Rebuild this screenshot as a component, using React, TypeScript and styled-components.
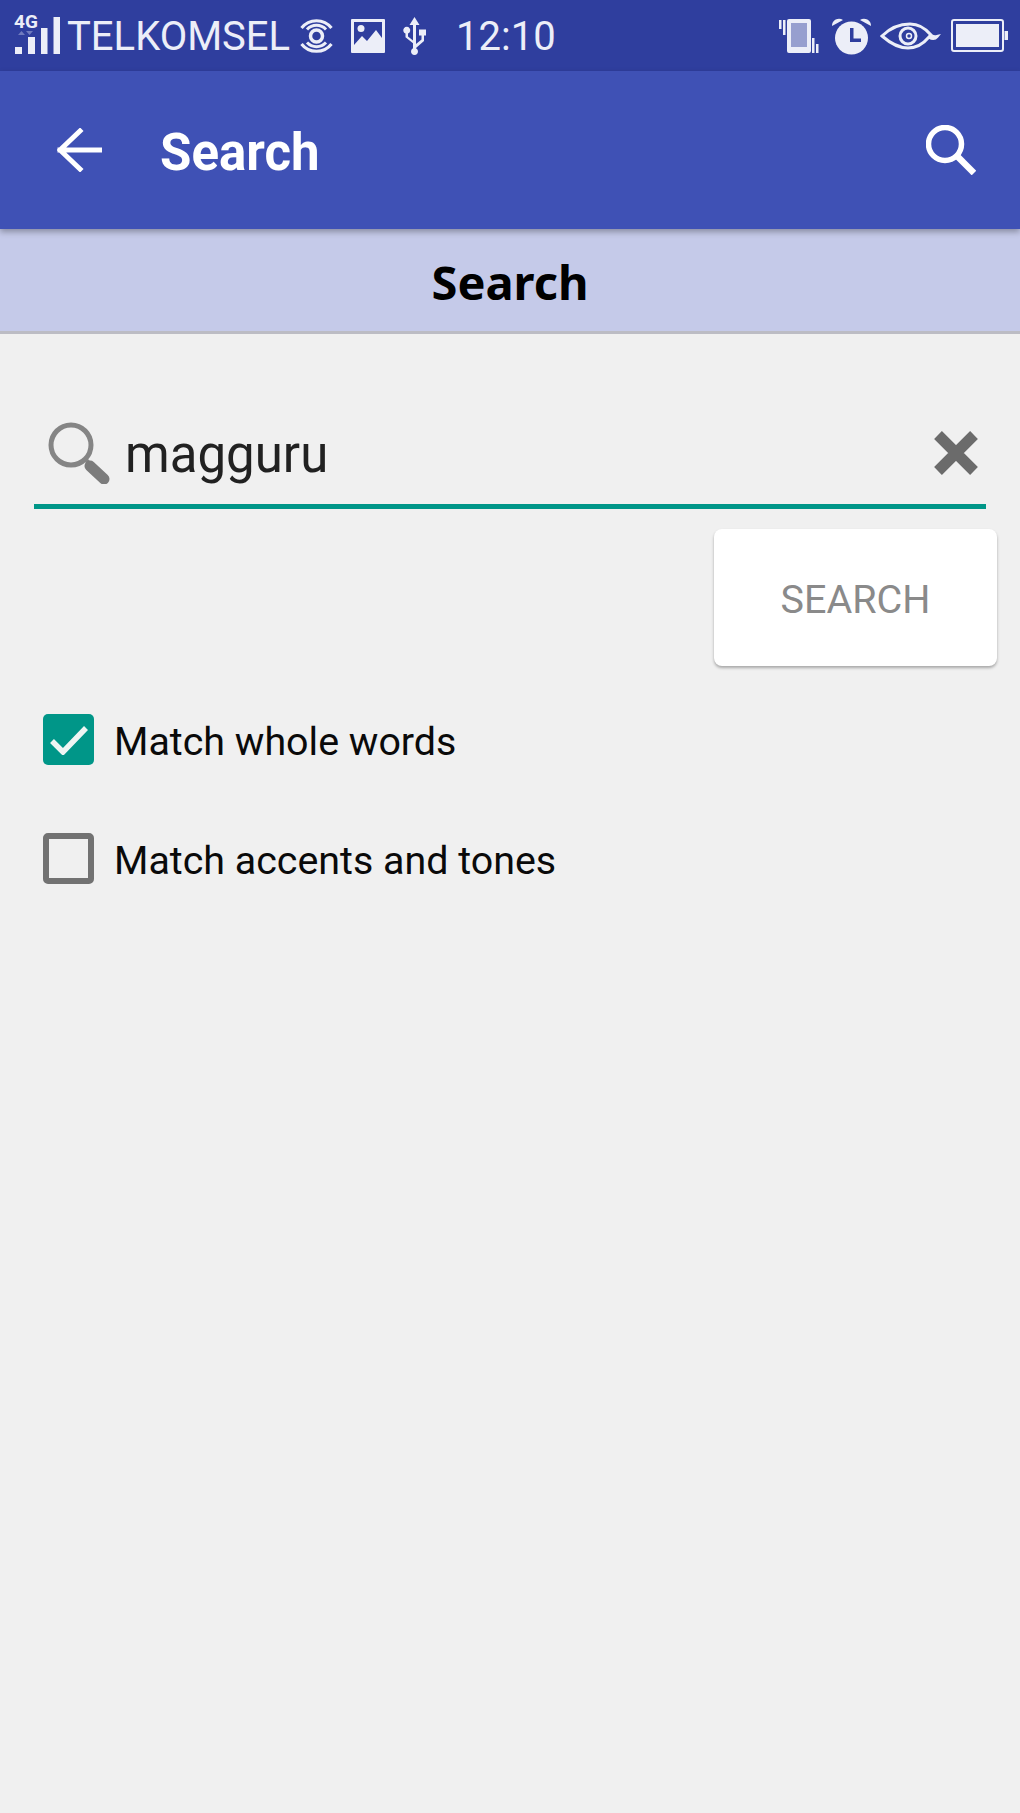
import React from "react";
import styled, { createGlobalStyle } from "styled-components";

const Global = createGlobalStyle`
  html, body { margin: 0; padding: 0; background: #f0f0f0; }
  * { box-sizing: border-box; }
`;

const Page = styled.div`
  width: 1020px;
  height: 1813px;
  background: #f0f0f0;
  font-family: Roboto, "Liberation Sans", sans-serif;
  overflow: hidden;
`;

const StatusBar = styled.div`
  height: 71px;
  background: #2f3e9e;
  display: flex;
  align-items: center;
  color: #eceef8;
  padding: 0 12px 0 15px;
`;

const StatusGroup = styled.div`
  display: flex;
  align-items: center;
`;

const Spacer = styled.div`
  flex: 1;
`;

const Carrier = styled.span<{ $left: number }>`
  font-size: 40px;
  line-height: 44px;
  padding-top: 3px;
  margin-left: ${(p) => p.$left}px;
  white-space: nowrap;
`;

const StatusIcon = styled.svg<{ $left?: number }>`
  display: block;
  flex: none;
  margin-left: ${(p) => p.$left ?? 0}px;
  fill: #eceef8;
  overflow: visible;
`;

const Toolbar = styled.header`
  height: 158px;
  background: #3f51b5;
  display: flex;
  align-items: center;
  padding: 0 44px 0 57px;
  position: relative;
  z-index: 1;
  box-shadow: 0 3px 6px rgba(0, 0, 0, 0.3);
`;

const ToolbarTitle = styled.h1`
  margin: 5px 0 0 58px;
  font-size: 51px;
  line-height: 60px;
  font-weight: 700;
  color: #fff;
  flex: 1;
`;

const SubHeader = styled.div`
  height: 105px;
  background: #c5cae9;
  border-bottom: 3px solid #bcbcc4;
  display: flex;
  align-items: center;
  justify-content: center;
`;

const SubTitle = styled.h2`
  margin: 3px 0 0;
  font-family: "Noto Sans", "DejaVu Sans", sans-serif;
  font-weight: 700;
  font-size: 47px;
  line-height: 50px;
  color: #000;
`;

const Content = styled.main`
  display: flex;
  flex-direction: column;
  padding: 84px 23px 0 34px;
`;

const SearchField = styled.div`
  display: flex;
  align-items: center;
  height: 91px;
  width: 952px;
  padding: 0 8px 16px 14px;
  border-bottom: 5px solid #009688;
`;

const SearchText = styled.span`
  flex: 1;
  margin-left: 15px;
  font-size: 51px;
  line-height: 56px;
  padding-top: 4px;
  color: #212121;
`;

const SearchButton = styled.button`
  align-self: flex-end;
  width: 283px;
  height: 137px;
  margin-top: 20px;
  padding: 3px 0 0;
  border: 0;
  border-radius: 8px;
  background: #fff;
  box-shadow: 0 2px 3px rgba(0, 0, 0, 0.3);
  font-family: inherit;
  font-size: 39.500px;
  color: #8a8a8a;
`;

const OptionList = styled.div`
  display: flex;
  flex-direction: column;
  gap: 68px;
  margin: 48px 0 0 9px;
`;

const Option = styled.label`
  display: flex;
  align-items: center;
  gap: 20px;
  height: 51px;
  font-size: 39.400px;
  color: #0a0a0a;
`;

const OptionLabel = styled.span`
  padding-top: 4px;
`;

const Box = styled.span<{ $checked?: boolean }>`
  width: 51px;
  height: 51px;
  flex: none;
  display: flex;
  align-items: center;
  justify-content: center;
  border-radius: 5px;
  background: ${(p) => (p.$checked ? "#009688" : "transparent")};
  border: ${(p) => (p.$checked ? "0" : "6px solid #727272")};
`;

export default function App() {
  return (
    <Page>
      <Global />
      <StatusBar>
        <StatusGroup>
          <StatusIcon width={45} height={71} viewBox="0 0 45 71">
            <text x="-1" y="28" fontFamily="Roboto, sans-serif" fontWeight="700" fontSize="19" fill="#eceef8">4G</text>
            <path d="M3 35h7l-3.500-4zM11 31h7l-3.500 4z" opacity=".35" />
            <rect x="0" y="47" width="7" height="7" />
            <rect x="13" y="37" width="7" height="17" />
            <rect x="26" y="28" width="6.500" height="26" />
            <rect x="38.500" y="17" width="6.500" height="37" />
          </StatusIcon>
          <Carrier $left={7}>TELKOMSEL</Carrier>
          <StatusIcon $left={9} width={35} height={34} viewBox="0 0 35 34">
            <circle cx="17.500" cy="17" r="6" fill="none" stroke="#eceef8" strokeWidth="3.500" />
            <path d="M8 10.500a13 13 0 0 1 19 0M2.500 9a19 19 0 0 1 30 0M8 23.500a13 13 0 0 0 19 0M2.500 25a19 19 0 0 0 30 0" fill="none" stroke="#eceef8" strokeWidth="3" />
          </StatusIcon>
          <StatusIcon $left={17} width={34} height={34} viewBox="0 0 34 34">
            <path fillRule="evenodd" d="M1 0h32a1 1 0 0 1 1 1v32a1 1 0 0 1-1 1H1a1 1 0 0 1-1-1V1a1 1 0 0 1 1-1zM3 3v23l8-9 5 5 9-11 6 8V3z" />
            <circle cx="10" cy="9.500" r="3.500" />
          </StatusIcon>
          <StatusIcon $left={16} width={27} height={37} viewBox="0 0 27 37">
            <path d="M13.500 0l5 8H15v19l5.500-4.500v-4H18v-6h7v6h-2v5.500L15 31v.3a3.500 3.500 0 1 1-3 0v-5l-7.500-6V16.500a3.500 3.500 0 1 1 2.500 0v3l5 4V8H8.500z" />
          </StatusIcon>
          <Carrier $left={28}>12:10</Carrier>
        </StatusGroup>
        <Spacer />
        <StatusGroup>
          <StatusIcon width={39} height={36} viewBox="0 0 39 36">
            <path fillRule="evenodd" d="M10 1h20a2 2 0 0 1 2 2v30a2 2 0 0 1-2 2H10a2 2 0 0 1-2-2V3a2 2 0 0 1 2-2zm2 4v24h16V5z" />
            <rect x="12" y="5" width="16" height="24" opacity=".55" />
            <rect x="0" y="2" width="2.500" height="9" />
            <rect x="4" y="2" width="2.500" height="15" />
            <rect x="33" y="20" width="2.500" height="15" />
            <rect x="37" y="26" width="2.500" height="9" />
          </StatusIcon>
          <StatusIcon $left={14} width={39} height={38} viewBox="0 0 39 38">
            <path d="M0 9a7 7 0 0 1 11-6zM39 9a7 7 0 0 0-11-6z" />
            <circle cx="19.500" cy="21" r="16.500" />
            <path d="M18 11h3.500v10.500H29V25H18z" fill="#2f3e9e" />
          </StatusIcon>
          <StatusIcon $left={10} width={57} height={26} viewBox="0 0 57 26">
            <path d="M1 13C10 4 20 1 29 1c9 0 16 5 21 11 2 2 4 2 6 1.500-2 2.500-5 2.500-8 .5C43 20 36 25 27 25 17 25 9 20 1 13z" fill="none" stroke="#eceef8" strokeWidth="3" />
            <circle cx="27" cy="13" r="8" fill="none" stroke="#eceef8" strokeWidth="3" />
            <circle cx="28" cy="13" r="2.500" fill="none" stroke="#eceef8" strokeWidth="1.500" />
          </StatusIcon>
          <StatusIcon $left={13} width={57} height={33} viewBox="0 0 57 33">
            <rect x="1" y="1" width="51" height="31" rx="2" fill="none" stroke="#eceef8" strokeWidth="2" />
            <rect x="5" y="5" width="43" height="23" />
            <rect x="53.500" y="12" width="3.500" height="9" />
          </StatusIcon>
        </StatusGroup>
      </StatusBar>

      <Toolbar>
        <svg width="45" height="44" viewBox="0 0 45 44" fill="none" stroke="#fff" strokeWidth="5" strokeLinecap="square">
          <path d="M3 22h40M23 3L3 22l20 19" />
        </svg>
        <ToolbarTitle>Search</ToolbarTitle>
        <svg width="50" height="50" viewBox="0 0 50 50" fill="none" stroke="#fff">
          <circle cx="19" cy="19" r="16.500" strokeWidth="5.500" />
          <path d="M31 31l17 17" strokeWidth="6.500" />
        </svg>
      </Toolbar>

      <SubHeader>
        <SubTitle>Search</SubTitle>
      </SubHeader>

      <Content>
        <SearchField>
          <svg width="62" height="62" viewBox="0 0 62 62" fill="none">
            <circle cx="23" cy="23" r="20" stroke="#858585" strokeWidth="5" />
            <path d="M38 38l4 4" stroke="#858585" strokeWidth="4" />
            <path d="M42 44l14 13" stroke="#7c7c7c" strokeWidth="11" strokeLinecap="round" />
          </svg>
          <SearchText>magguru</SearchText>
          <svg width="44" height="44" viewBox="0 0 44 44" fill="none" stroke="#6b6b6b" strokeWidth="11">
            <path d="M4 4l36 36M40 4L4 40" />
          </svg>
        </SearchField>
        <SearchButton type="button">SEARCH</SearchButton>
        <OptionList>
          <Option>
            <Box $checked>
              <svg width="38" height="30" viewBox="0 0 38 30" fill="none" stroke="#eef5f3" strokeWidth="5.500">
                <path d="M2 16l11 11L36 3" />
              </svg>
            </Box>
            <OptionLabel>Match whole words</OptionLabel>
          </Option>
          <Option>
            <Box />
            <OptionLabel>Match accents and tones</OptionLabel>
          </Option>
        </OptionList>
      </Content>
    </Page>
  );
}
